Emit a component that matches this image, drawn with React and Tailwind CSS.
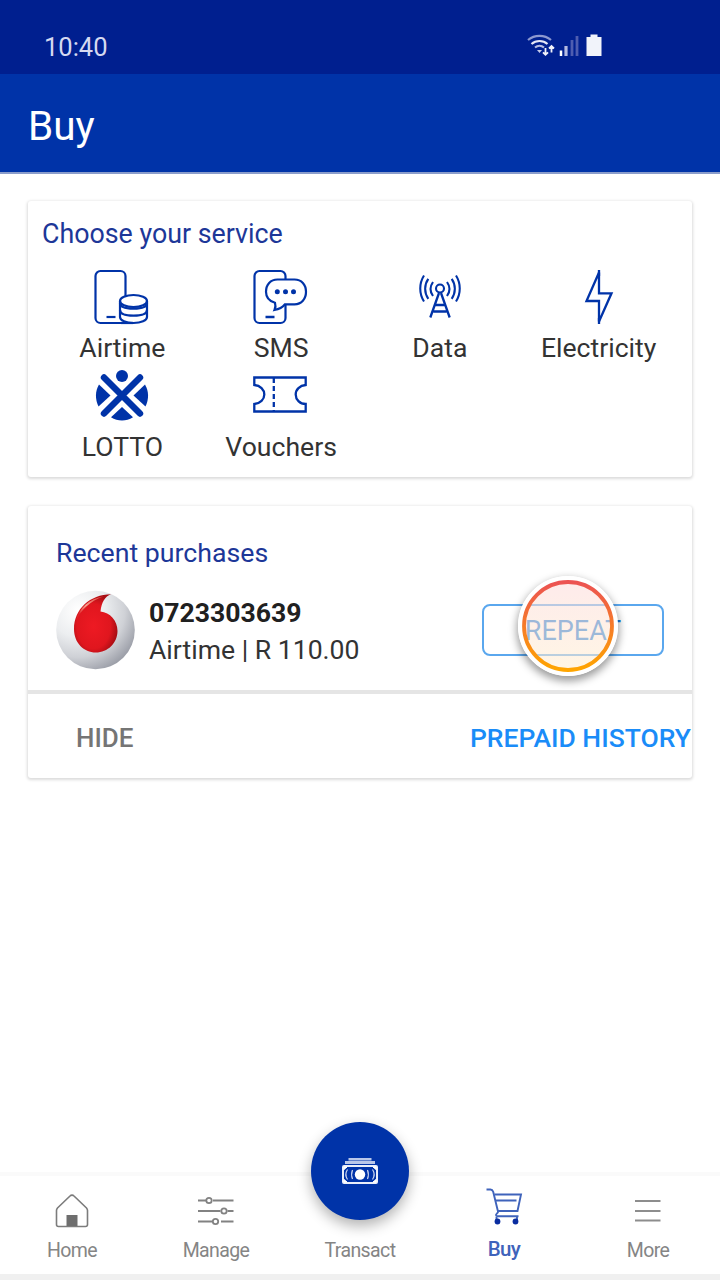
import React, { useState } from "react";

const BLUE = "#0033a8";

// Service icons, all drawn on a 56x56 box
function AirtimeIcon() {
  return (
    <svg width="56" height="56" viewBox="1 0 56 56" fill="none" stroke={BLUE} strokeWidth="2.200">
      <path d="M31 54H7.500a5 5 0 0 1-5-5V7a5 5 0 0 1 5-5h20a5 5 0 0 1 5 5v20" />
      <path d="M13.500 48h9" />
      <ellipse cx="40.500" cy="32" rx="13.500" ry="6" fill="#fff" />
      <path d="M27 32V48c0 3.600 6 6 13.500 6S54 51.600 54 48V32" />
      <path d="M27 34c0 4.500 6 5.700 13.500 5.700S54 38.500 54 34M27 41c0 4.500 6 5.700 13.500 5.700S54 45.500 54 41" />
      <path d="M28 54h12" />
    </svg>
  );
}

function SmsIcon() {
  return (
    <svg width="56" height="56" viewBox="1 0 56 56" fill="none" stroke={BLUE} strokeWidth="2.200">
      <path d="M33.500 11V7a5 5 0 0 0-5-5h-21a5 5 0 0 0-5 5v42a5 5 0 0 0 5 5h21a5 5 0 0 0 5-5V35.500" />
      <path d="M13.500 48h9" strokeWidth="2.500" />
      <path d="M25.500 10.500h17c7 0 11.500 5 11.500 12.300S49.500 35.300 42.500 35.300H33c-2.500 3.200-6 5-10.500 5.700 1.200-2.600 1.200-5 .5-7.200-5.500-1.500-9-5.600-9-11 0-7.300 4.500-12.300 11.500-12.300Z" fill="#fff" />
      <g fill={BLUE} stroke="none">
        <circle cx="25.300" cy="22.700" r="2.500" />
        <circle cx="33.500" cy="22.700" r="2.500" />
        <circle cx="41.500" cy="22.700" r="2.500" />
      </g>
    </svg>
  );
}

function DataIcon() {
  return (
    <svg width="56" height="56" viewBox="0 0 56 56" fill="none" stroke={BLUE} strokeWidth="2.100">
      <circle cx="28" cy="19.500" r="4" />
      <path d="M27 24 18.300 48.500M29 24 37.700 48.500M23.500 36h9M21.500 42.500h13" strokeWidth="2.300" />
      <path d="M21 13c-3.200 4.500-3.200 9.500 0 14M16.300 9.800c-4.200 6-4.200 14 0 20M12 6.500c-5 8-5 18 0 26" />
      <path d="M35 13c3.200 4.500 3.200 9.500 0 14M39.700 9.800c4.200 6 4.200 14 0 20M44 6.500c5 8 5 18 0 26" />
    </svg>
  );
}

function ElectricityIcon() {
  return (
    <svg width="56" height="56" viewBox="0 0 56 56" fill="none" stroke={BLUE} strokeWidth="2.300">
      <path d="M28 3.500 15.500 32H28v20.500L40.500 24.300H28Z" />
      <path d="M28 1v6M28 49v6" strokeWidth="2.300" />
    </svg>
  );
}

function LottoIcon() {
  return (
    <svg width="56" height="56" viewBox="0 0 56 56">
      <g fill={BLUE}>
        <circle cx="28" cy="8" r="6" />
        <path d="M5 16.500 16.500 27.500 4.500 38.500C1 31 1 23.500 5 16.500Z" />
        <path d="M51 16.500 39.500 27.500 51.500 38.500C55 31 55 23.500 51 16.500Z" />
        <path d="M28 39 39 49.300C32 53.700 24 53.700 17 49.300Z" />
      </g>
      <path d="M10 9.500 46 45.500M46 9.500 10 45.500" stroke={BLUE} strokeWidth="6.400" strokeLinecap="round" />
    </svg>
  );
}

function VouchersIcon() {
  return (
    <svg width="56" height="56" viewBox="1 1 56 56" fill="none" stroke={BLUE} strokeWidth="2.300">
      <path d="M2.300 10.500h51.400v7.500c-6 .5-10 4.500-10 9.500s4 9.500 10 9.500v7.500H2.300V37c6-.5 10-4.500 10-9.500S8.300 18.500 2.300 18Z" />
      <path d="M21.800 11v33" strokeDasharray="5 3" />
    </svg>
  );
}

// Bottom navigation icons
function HomeIcon() {
  return (
    <svg width="36" height="36" viewBox="0 0 36 36" fill="none" stroke="#7c7c7c" strokeWidth="1.600">
      <path d="M4.500 33.500a2 2 0 0 1-2-2V17.500c0-1 .4-1.800 1-2.500L16 3a2.700 2.700 0 0 1 4 0l12.500 12c.6.700 1 1.500 1 2.500v14a2 2 0 0 1-2 2Z" />
      <path d="M12.500 22h11v11h-11Z" fill="#6e6e6e" stroke="none" />
    </svg>
  );
}

function ManageIcon() {
  return (
    <svg width="36" height="36" viewBox="0 0 36 36" fill="none" stroke="#828282" strokeWidth="1.800">
      <path d="M0 7.500h8M15 7.500h20.500M0 18h22.500M29.500 18h6M0 28.500h14M23 28.500h12.500" />
      <circle cx="11" cy="7.500" r="2.700" />
      <circle cx="26" cy="18" r="2.700" />
      <circle cx="17.500" cy="28.500" r="2.700" />
    </svg>
  );
}

function CartIcon() {
  return (
    <svg width="38" height="38" viewBox="-0.500 0 38 38" fill="none" stroke="#3f63bb" strokeWidth="1.900">
      <path d="M1 2.500h4c1.500 0 2.200.8 2.700 2.200L12.500 24.500c.4 1.500-2 2-2 3.500 0 .8.500 1.200 1.500 1.200h21" />
      <path d="M9 7.500h26.500l-3.500 16.500H12.500M10.500 13.500H31" />
      <path d="M11 30v3M31.500 29v4" />
      <g fill="#0a2da0" stroke="none">
        <circle cx="12" cy="34.500" r="2.900" />
        <circle cx="30" cy="34.500" r="2.900" />
      </g>
    </svg>
  );
}

function MoreIcon() {
  return (
    <svg width="36" height="36" viewBox="0 0 36 36" fill="none" stroke="#8d8d8d" strokeWidth="1.800">
      <path d="M5 8h25.500M5 18h25.500M5 27.500h25.500" />
    </svg>
  );
}

function CashIcon() {
  return (
    <svg width="36" height="26" viewBox="0 0 36 26" fill="none">
      <path d="M6.500 1h23M3 4.500h30" stroke="#b9c7e9" strokeWidth="2.800" />
      <rect x="1" y="8" width="34" height="17" rx="1" stroke="#e9eefa" strokeWidth="2" />
      <path d="M2 11.500V9h3ZM34 11.500V9h-3ZM2 21.500v2.500h3ZM34 21.500v2.500h-3Z" fill="#fff" stroke="#fff" />
      <path d="M5.500 11.500c-2 3-2 7 0 10M10.500 12c-1.200 3-1.200 6 0 9M30.500 11.500c2 3 2 7 0 10M25.500 12c1.200 3 1.200 6 0 9" stroke="#cdd7f0" strokeWidth="1.200" />
      <circle cx="18" cy="16.500" r="5.200" fill="#fff" />
    </svg>
  );
}

function StatusIcons() {
  return (
    <svg className="mt-[34px] h-6 w-[76px]" viewBox="0 0 76 24" fill="none">
      <path d="M1 6c6.500-5.500 16.500-5.500 23 0" stroke="#8c98d0" strokeWidth="2.200" />
      <path d="M4.500 10c4.500-4 11.500-4 16 0" stroke="#e6e8f7" strokeWidth="2.200" />
      <path d="M8 13.500c2.600-2.200 6.400-2.200 9 0" stroke="#b7bee3" strokeWidth="2" />
      <path d="M10 16 12.500 19 15 16Z" fill="#c5cae9" />
      <path d="M18.500 14v6M16 18.300 18.500 20.800 21 18.300M24.500 18.500v-6M22 14.500 24.500 12 27 14.500" stroke="#f1f2fa" strokeWidth="1.800" />
      <path d="M34 22v-5.500" stroke="#fff" strokeWidth="2.500" />
      <path d="M39 22V12" stroke="#b4bae0" strokeWidth="3.200" />
      <path d="M45 22V6M50 22V2" stroke="#4e5db0" strokeWidth="2.800" />
      <path d="M63.500 0.500h7v2.500h4v19H59.500V3h4Z" fill="#f1f3fa" />
    </svg>
  );
}

function VodacomLogo() {
  return (
    <svg width="80" height="80" viewBox="0 0 80 80">
      <defs>
        <radialGradient id="silver" cx="0.280" cy="0.250" r="0.850">
          <stop offset="0" stopColor="#ffffff" />
          <stop offset="0.400" stopColor="#eceef0" />
          <stop offset="0.700" stopColor="#cfd1d6" />
          <stop offset="1" stopColor="#9699a3" />
        </radialGradient>
        <radialGradient id="red" cx="0.450" cy="0.550" r="0.550">
          <stop offset="0" stopColor="#ee1a23" />
          <stop offset="0.700" stopColor="#e0161e" />
          <stop offset="1" stopColor="#a80d13" />
        </radialGradient>
        <linearGradient id="shine" x1="0" y1="1" x2="1" y2="0">
          <stop offset="0.200" stopColor="#e2252a" />
          <stop offset="0.500" stopColor="#f6a38f" />
          <stop offset="1" stopColor="#d9302d" />
        </linearGradient>
      </defs>
      <circle cx="39.500" cy="40" r="39.300" fill="url(#silver)" />
      <path d="M55 4.200C49 6.500 45.500 12 44.500 21.500 54 22.500 61.500 30.500 61.500 41c0 12-9.700 21.500-21.700 21.500S18 53 18 39C18 19 34 4.500 55 4.200Z" fill="url(#red)" />
      <path d="M20 31C23 18 33 8.500 48 6.200 34 11 25 19.500 20 31Z" fill="url(#shine)" />
    </svg>
  );
}

const services = [
  { name: "Airtime", icon: <AirtimeIcon /> },
  { name: "SMS", icon: <SmsIcon /> },
  { name: "Data", icon: <DataIcon /> },
  { name: "Electricity", icon: <ElectricityIcon /> },
  { name: "LOTTO", icon: <LottoIcon /> },
  { name: "Vouchers", icon: <VouchersIcon /> }
];

const tabs = [
  { name: "Home", icon: <HomeIcon /> },
  { name: "Manage", icon: <ManageIcon /> },
  { name: "Transact", icon: null },
  { name: "Buy", icon: <CartIcon /> },
  { name: "More", icon: <MoreIcon /> }
];

export default function App() {
  const [active, setActive] = useState("Buy");

  return (
    <div className="w-[720px] h-[1280px] flex flex-col overflow-hidden bg-white font-['Roboto',sans-serif] text-[26.6px] leading-8 text-[#333333]">
      {/* Status bar */}
      <div className="h-[74px] flex justify-between bg-[#001f8f] pl-11 pr-[117px]">
        <span className="mt-[31px] text-[25.5px] text-[#d5d9f0]">10:40</span>
        <StatusIcons />
      </div>

      <header className="h-[100px] shrink-0 bg-[#0033a8] border-b-2 border-[#8b9dcb] pl-[28px] pt-[28px]">
        <h1 className="text-[40.5px] leading-[48px] text-white">Buy</h1>
      </header>

      <main className="flex-1 px-7 pt-[27px]">
        <section className="h-[276px] rounded-[3px] bg-white pl-[14px] pr-[14px] pt-[17px] shadow-[0_1px_3px_1px_#dcdcdc]">
          <h2 className="text-[26.8px] text-[#1d3798]">Choose your service</h2>
          <div className="mt-[19px] ml-px grid grid-cols-4 gap-y-1">
            {services.map(s => (
              <button key={s.name} type="button" className="flex flex-col items-center">
                {s.icon}
                <span className="mt-[7px] whitespace-nowrap">{s.name}</span>
              </button>
            ))}
          </div>
        </section>

        <section className="mt-[29px] h-[272px] rounded-[3px] bg-white shadow-[0_1px_3px_1px_#dcdcdc]">
          <div className="h-[184px] px-[28px] pt-[31px]">
            <h2 className="text-[26.7px] text-[#1d3798]">Recent purchases</h2>
            <div className="mt-[21px] flex items-start">
              <VodacomLogo />
              <div className="ml-[13px] mt-[7px]">
                <div className="font-bold text-[#202020]">0723303639</div>
                <div className="mt-[5px]">Airtime | R 110.00</div>
              </div>
              <div className="relative ml-auto mt-[14px]">
                <button type="button" className="block w-[182px] h-[52px] rounded-lg border-2 border-[#5aa7ee] pt-[2px] text-[27px] text-[#1479dc]">
                  REPEAT
                </button>
                {/* Tap marker */}
                <div className="absolute left-[36px] -top-[28px] w-[100px] h-[100px] rounded-full shadow-[0_4px_9px_1px_rgba(0,0,0,0.4)]">
                  <svg width="100" height="100" viewBox="0 0 100 100">
                    <defs>
                      <linearGradient id="ring" x1="0" y1="0" x2="0" y2="1">
                        <stop offset="0" stopColor="#ec5252" />
                        <stop offset="1" stopColor="#ffa500" />
                      </linearGradient>
                      <linearGradient id="tint" x1="0" y1="0" x2="0" y2="1">
                        <stop offset="0" stopColor="#fddcdc" />
                        <stop offset="1" stopColor="#ffefd2" />
                      </linearGradient>
                    </defs>
                    <circle cx="50" cy="50" r="44" fill="url(#tint)" fillOpacity="0.580" />
                    <circle cx="50" cy="50" r="47" fill="none" stroke="#fff" strokeWidth="6" />
                    <circle cx="50" cy="50" r="44" fill="none" stroke="url(#ring)" strokeWidth="3.800" />
                  </svg>
                </div>
              </div>
            </div>
          </div>
          <div className="h-[88px] flex items-center justify-between border-t-4 border-[#e5e5e5] pl-[48px] pr-px pt-1 text-[26.5px] font-medium">
            <button type="button" className="text-[26px] text-[#757575]">HIDE</button>
            <button type="button" className="text-[#1a8cf8]">PREPAID HISTORY</button>
          </div>
        </section>
      </main>

      <nav className="relative h-[108px] shrink-0 border-t-4 border-[#fafafa] border-b-[6px] border-b-[#f0f0f0] bg-white grid grid-cols-5 text-[19.5px] leading-6 tracking-[-0.6px] text-[#858585]">
        {tabs.map(t => (
          <button
            key={t.name}
            type="button"
            onClick={() => setActive(t.name)}
            className={`flex flex-col items-center ${active === t.name ? "pt-[11px] text-[20.5px] font-medium tracking-[-0.7px] text-[#3f63bb]" : "pt-[17px]"}`}
          >
            <span className={active === t.name ? "h-[38px]" : "h-9"}>{t.icon}</span>
            <span className={active === t.name ? "mt-[12px]" : "mt-[10px]"}>{t.name}</span>
          </button>
        ))}
        <div className="absolute left-[311px] -top-[54px] w-[98px] h-[98px] rounded-full bg-[#0033a8] shadow-[0_6px_14px_rgba(0,0,0,0.3)] flex items-center justify-center">
          <CashIcon />
        </div>
      </nav>
    </div>
  );
}
